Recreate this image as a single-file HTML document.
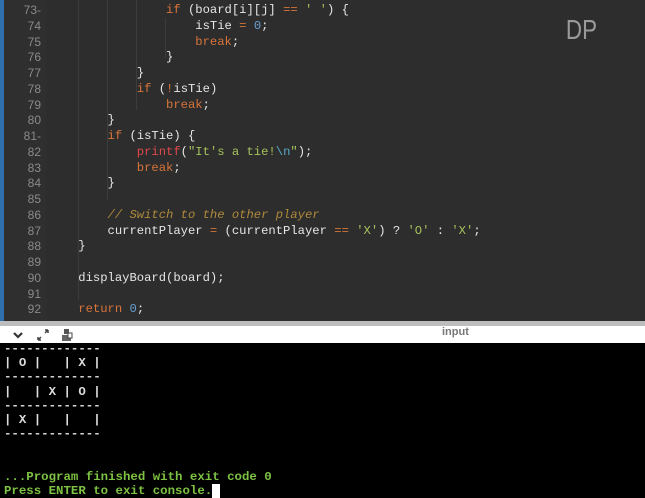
<!DOCTYPE html>
<html><head><meta charset="utf-8"><style>
body{margin:0;width:645px;height:498px;overflow:hidden;background:#000;position:relative;font-family:"Liberation Mono",monospace}
#ed{position:absolute;left:0;top:0;width:645px;height:321px;background:#2d2d2d;overflow:hidden}
#blue{position:absolute;left:0;top:0;width:4px;height:321px;background:#2f6fae}
#gut{position:absolute;left:4px;top:0;width:42px;height:321px;background:#2f2f2f}
.ln{position:absolute;left:4px;width:37px;text-align:right;color:#8a8a8a;font-size:12px;font-family:"Liberation Sans",sans-serif}
.cd{position:absolute;left:49px;white-space:pre;color:#e6e6e6;font-size:12.2px}
.k{color:#d9743a}.n{color:#6a9fd4}.s{color:#a5c25c}.f{color:#e0484b}.c{color:#b08a3c;font-style:italic}.e{color:#57a8c8}
.g{position:absolute;width:1px;background:#3c3c3c}
#sep{position:absolute;left:0;top:321px;width:645px;height:5px;background:#bdbdbd}
#bar{position:absolute;left:0;top:326px;width:645px;height:17px;background:#fff}
#con{position:absolute;left:4px;top:342px;white-space:pre;font-size:12.4px;line-height:14.2px;color:#ddd;font-weight:bold}
.gr{color:#7dc242}
</style></head><body>
<div id="ed">
<div id="blue"></div><div id="gut"></div>
<div class="g" style="left:78px;top:0;height:300px"></div>
<div class="g" style="left:107px;top:0;height:200px"></div>
<div class="g" style="left:136px;top:0;height:110px"></div>
<div class="g" style="left:165px;top:18px;height:40px"></div>
<div style="position:absolute;left:562px;top:14px;color:#9a9a9a;font-family:'Liberation Sans',sans-serif;font-size:28px;font-weight:300;transform:scaleX(0.8)">DP</div>
<div class="ln" style="top:3px">73-</div><div class="cd" style="top:3px">                <span class="k">if</span> (board[i][j] <span class="k">==</span> <span class="s">' '</span>) {</div>
<div class="ln" style="top:19px">74</div><div class="cd" style="top:19px">                    isTie <span class="k">=</span> <span class="n">0</span>;</div>
<div class="ln" style="top:35px">75</div><div class="cd" style="top:35px">                    <span class="k">break</span>;</div>
<div class="ln" style="top:50px">76</div><div class="cd" style="top:50px">                }</div>
<div class="ln" style="top:66px">77</div><div class="cd" style="top:66px">            }</div>
<div class="ln" style="top:82px">78</div><div class="cd" style="top:82px">            <span class="k">if</span> (<span class="k">!</span>isTie)</div>
<div class="ln" style="top:98px">79</div><div class="cd" style="top:98px">                <span class="k">break</span>;</div>
<div class="ln" style="top:113px">80</div><div class="cd" style="top:113px">        }</div>
<div class="ln" style="top:129px">81-</div><div class="cd" style="top:129px">        <span class="k">if</span> (isTie) {</div>
<div class="ln" style="top:145px">82</div><div class="cd" style="top:145px">            <span class="f">printf</span>(<span class="s">"It's a tie!<span class="e">\n</span>"</span>);</div>
<div class="ln" style="top:161px">83</div><div class="cd" style="top:161px">            <span class="k">break</span>;</div>
<div class="ln" style="top:176px">84</div><div class="cd" style="top:176px">        }</div>
<div class="ln" style="top:192px">85</div>
<div class="ln" style="top:208px">86</div><div class="cd" style="top:208px">        <span class="c">// Switch to the other player</span></div>
<div class="ln" style="top:224px">87</div><div class="cd" style="top:224px">        currentPlayer <span class="k">=</span> (currentPlayer <span class="k">==</span> <span class="s">'X'</span>) ? <span class="s">'O'</span> : <span class="s">'X'</span>;</div>
<div class="ln" style="top:239px">88</div><div class="cd" style="top:239px">    }</div>
<div class="ln" style="top:255px">89</div>
<div class="ln" style="top:271px">90</div><div class="cd" style="top:271px">    displayBoard(board);</div>
<div class="ln" style="top:287px">91</div>
<div class="ln" style="top:302px">92</div><div class="cd" style="top:302px">    <span class="k">return</span> <span class="n">0</span>;</div>
</div>
<div id="sep"></div>
<div id="con">-------------
| O |   | X |
-------------
|   | X | O |
-------------
| X |   |   |
-------------


<span class="gr">...Program finished with exit code 0
Press ENTER to exit console.</span><span style="background:#fff">&nbsp;</span></div>
<div id="bar">
<svg style="position:absolute;left:12px;top:4px" width="12" height="10"><path d="M2 3 L6 7 L10 3" stroke="#333" stroke-width="2.2" fill="none"/></svg>
<svg style="position:absolute;left:36px;top:2px" width="14" height="14"><path d="M2 12 L5 9 M9 5 L12 2 M12 2 L9 2 M12 2 L12 5 M2 12 L5 12 M2 12 L2 9" stroke="#444" stroke-width="1.5" fill="none"/></svg>
<svg style="position:absolute;left:61px;top:2px" width="12" height="14"><rect x="3" y="1" width="5" height="5" fill="#555"/><rect x="1" y="7" width="9" height="6" fill="#666"/><rect x="7" y="5" width="4" height="5" fill="#fff" stroke="#444"/></svg>
<div style="position:absolute;left:442px;top:0;font-family:'Liberation Sans',sans-serif;font-size:11px;font-weight:bold;color:#777">input</div>
</div>
</body></html>
